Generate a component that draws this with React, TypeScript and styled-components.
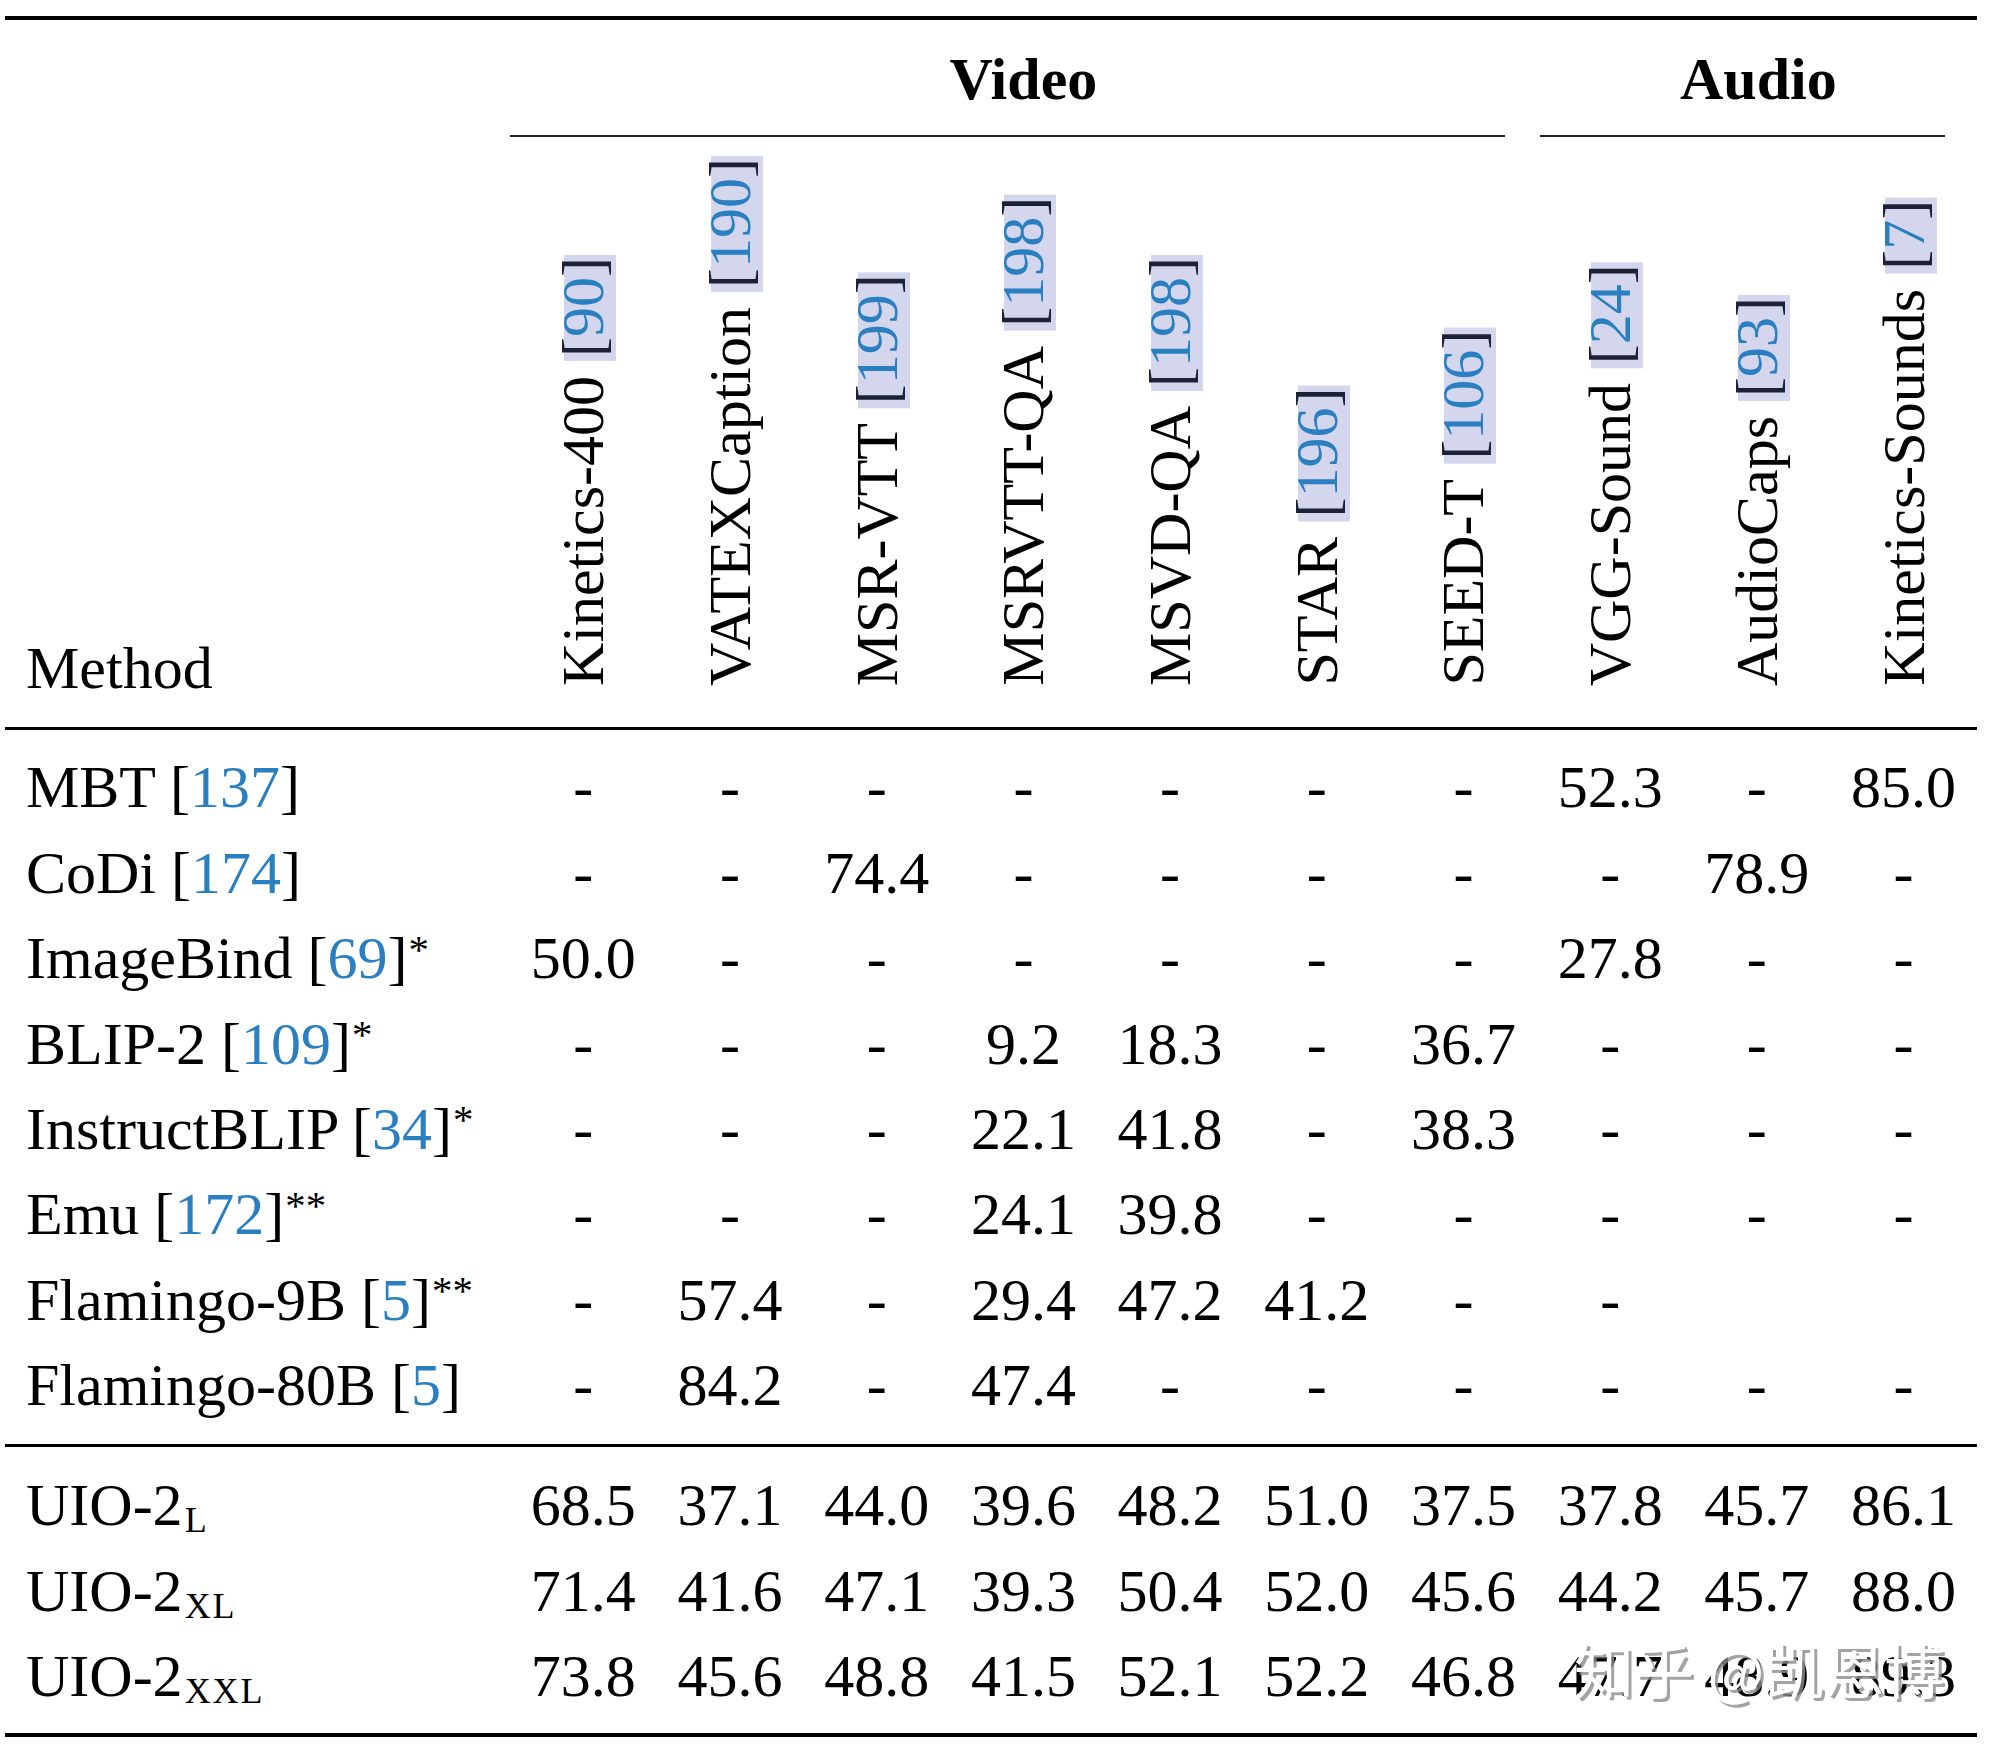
import React from 'react';
import styled, { createGlobalStyle } from 'styled-components';

const GlobalStyle = createGlobalStyle`
  html, body {
    margin: 0;
    padding: 0;
    background: #fff;
  }
  body {
    font-family: "Liberation Serif", "Times New Roman", serif;
    color: #000;
  }
`;

// first column + ten metric columns
const COLS = '505px repeat(10, 146.7px)';
const ROW_H = '85.4px';

const Page = styled.div`
  position: relative;
  width: 1972px;
  padding: 16px 0 0 5px;
`;

const Table = styled.div`
  border-top: 4px solid #000;
  border-bottom: 4px solid #000;
  font-size: 60px;
`;

const GroupRow = styled.div`
  display: grid;
  grid-template-columns: ${COLS};
  padding-top: 17px;
`;

const GroupCell = styled.div<{ $span: string; $trimLeft: number }>`
  grid-column: ${p => p.$span};
  padding-left: ${p => p.$trimLeft}px;
`;

const GroupLabel = styled.div`
  font-weight: bold;
  text-align: center;
  line-height: ${ROW_H};
`;

const CmidRule = styled.div`
  height: 2px;
  background: #222;
  margin: 13px 32px 0 0;
`;

const HeadRow = styled.div`
  display: grid;
  grid-template-columns: ${COLS};
  align-items: end;
  height: 589.6px;
`;

const MethodHead = styled.div`
  padding-left: 21px;
  line-height: ${ROW_H};
  margin-bottom: 15.6px;
`;

const RotCell = styled.div`
  display: flex;
  justify-content: center;
  padding-bottom: 41px;
`;

const RotText = styled.span`
  writing-mode: vertical-rl;
  transform: rotate(180deg);
  white-space: nowrap;
  line-height: 1;
`;

const HeadCite = styled.span`
  padding: 4px 0 2px;
  color: #1c2135;
  background: linear-gradient(to left, transparent 14px, #d4d6ee 14px);
`;

const Cite = styled.span`
  color: #2a7fc1;
`;

const MidRule = styled.div`
  height: 3px;
  background: #000;
`;

const Body = styled.div<{ $top: number; $bottom: number }>`
  padding: ${p => p.$top}px 0 ${p => p.$bottom}px;
`;

const Row = styled.div`
  display: grid;
  grid-template-columns: ${COLS};
  line-height: ${ROW_H};
`;

const NameCell = styled.div`
  padding-left: 21px;
  white-space: nowrap;
`;

const ValCell = styled.div`
  text-align: center;
`;

const Star = styled.sup`
  font-size: 0.68em;
  line-height: 0;
  vertical-align: 0.38em;
  margin-left: 1px;
`;

const SizeSub = styled.sub`
  font-family: "Liberation Serif", "Times New Roman", serif;
  font-size: 36px;
  letter-spacing: 2px;
  line-height: 0;
  vertical-align: -7px;
  margin-left: 2px;
`;

const Watermark = styled.div`
  position: absolute;
  left: 1574px;
  top: 1624px;
  font-family: "Noto Sans CJK SC", "Noto Sans", sans-serif;
  font-size: 60px;
  color: #fff;
  text-shadow: 3px 3px 0 rgba(140, 140, 140, 0.8);
  white-space: nowrap;
  pointer-events: none;
`;

const datasets = [
  { name: 'Kinetics-400', ref: '90' },
  { name: 'VATEXCaption', ref: '190' },
  { name: 'MSR-VTT', ref: '199' },
  { name: 'MSRVTT-QA', ref: '198' },
  { name: 'MSVD-QA', ref: '198' },
  { name: 'STAR', ref: '196' },
  { name: 'SEED-T', ref: '106' },
  { name: 'VGG-Sound', ref: '24' },
  { name: 'AudioCaps', ref: '93' },
  { name: 'Kinetics-Sounds', ref: '7' },
];

const baselines = [
  { name: 'MBT', ref: '137', star: '', vals: ['-', '-', '-', '-', '-', '-', '-', '52.3', '-', '85.0'] },
  { name: 'CoDi', ref: '174', star: '', vals: ['-', '-', '74.4', '-', '-', '-', '-', '-', '78.9', '-'] },
  { name: 'ImageBind', ref: '69', star: '*', vals: ['50.0', '-', '-', '-', '-', '-', '-', '27.8', '-', '-'] },
  { name: 'BLIP-2', ref: '109', star: '*', vals: ['-', '-', '-', '9.2', '18.3', '-', '36.7', '-', '-', '-'] },
  { name: 'InstructBLIP', ref: '34', star: '*', vals: ['-', '-', '-', '22.1', '41.8', '-', '38.3', '-', '-', '-'] },
  { name: 'Emu', ref: '172', star: '**', vals: ['-', '-', '-', '24.1', '39.8', '-', '-', '-', '-', '-'] },
  { name: 'Flamingo-9B', ref: '5', star: '**', vals: ['-', '57.4', '-', '29.4', '47.2', '41.2', '-', '-', '', ''] },
  { name: 'Flamingo-80B', ref: '5', star: '', vals: ['-', '84.2', '-', '47.4', '-', '-', '-', '-', '-', '-'] },
];

const ours = [
  { size: 'L', vals: ['68.5', '37.1', '44.0', '39.6', '48.2', '51.0', '37.5', '37.8', '45.7', '86.1'] },
  { size: 'XL', vals: ['71.4', '41.6', '47.1', '39.3', '50.4', '52.0', '45.6', '44.2', '45.7', '88.0'] },
  { size: 'XXL', vals: ['73.8', '45.6', '48.8', '41.5', '52.1', '52.2', '46.8', '47.7', '48.9', '89.3'] },
];

const App: React.FC = () => {
  return (
    <>
      <GlobalStyle />
      <Page>
        <Table>
          <GroupRow>
            <div />
            <GroupCell $span="2 / 9" $trimLeft={0}>
              <GroupLabel>Video</GroupLabel>
              <CmidRule />
            </GroupCell>
            <GroupCell $span="9 / 12" $trimLeft={3}>
              <GroupLabel>Audio</GroupLabel>
              <CmidRule />
            </GroupCell>
          </GroupRow>

          <HeadRow>
            <MethodHead>Method</MethodHead>
            {datasets.map(d => (
              <RotCell key={d.name}>
                <RotText>
                  {d.name}{' '}
                  <HeadCite>[<Cite>{d.ref}</Cite>]</HeadCite>
                </RotText>
              </RotCell>
            ))}
          </HeadRow>

          <MidRule />

          <Body $top={15.3} $bottom={15.5}>
            {baselines.map(b => (
              <Row key={b.name}>
                <NameCell>
                  {b.name} [<Cite>{b.ref}</Cite>]{b.star && <Star>{b.star}</Star>}
                </NameCell>
                {b.vals.map((v, i) => (
                  <ValCell key={i}>{v}</ValCell>
                ))}
              </Row>
            ))}
          </Body>

          <MidRule />

          <Body $top={16.3} $bottom={13.5}>
            {ours.map(o => (
              <Row key={o.size}>
                <NameCell>
                  UIO-2<SizeSub>{o.size}</SizeSub>
                </NameCell>
                {o.vals.map((v, i) => (
                  <ValCell key={i}>{v}</ValCell>
                ))}
              </Row>
            ))}
          </Body>
        </Table>
        <Watermark>知乎 @凯恩博</Watermark>
      </Page>
    </>
  );
};

export default App;
